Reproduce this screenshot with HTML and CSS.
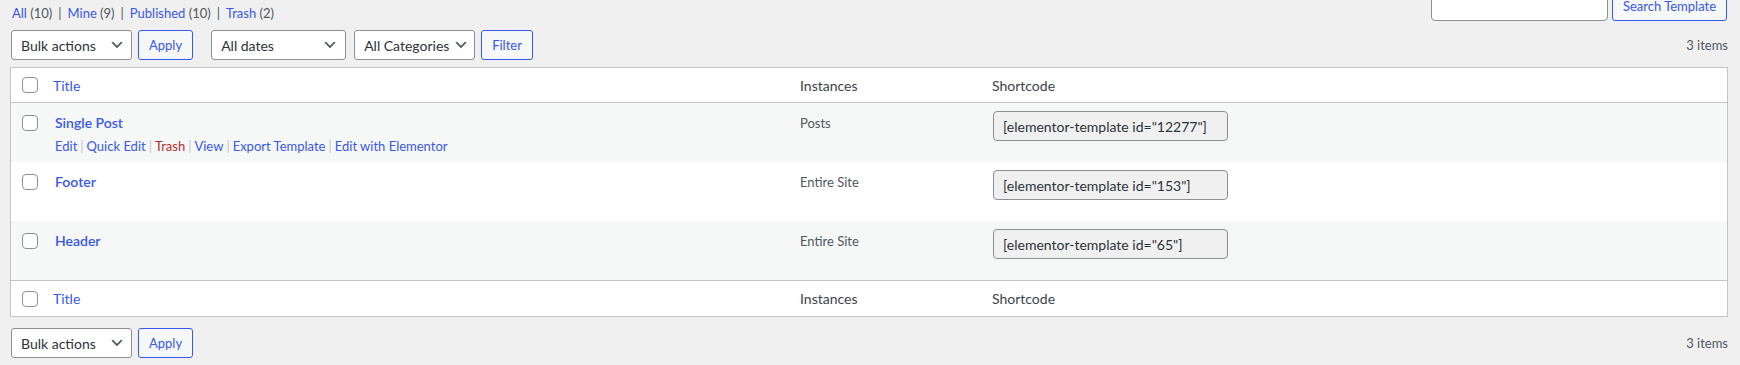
FILE: index.html
```html
<!DOCTYPE html>
<html lang="en">
<head>
<meta charset="utf-8">
<title>Templates</title>
<link rel="stylesheet" href="styles.css">
</head>
<body>
<div class="wrap">
  <div class="top-row">
    <ul class="subsubsub">
      <li><a href="#" class="current">All</a> <span class="count">(10)</span></li>
      <li class="sep">|</li>
      <li><a href="#">Mine</a> <span class="count">(9)</span></li>
      <li class="sep">|</li>
      <li><a href="#">Published</a> <span class="count">(10)</span></li>
      <li class="sep">|</li>
      <li><a href="#">Trash</a> <span class="count">(2)</span></li>
    </ul>
    <div class="search-box">
      <input class="search-input" type="search" aria-label="Search Templates">
      <button class="button search-btn">Search Template</button>
    </div>
  </div>

  <div class="tablenav tablenav-top">
    <div class="actions">
      <div class="select sel-bulk"><span>Bulk actions</span><svg viewBox="0 0 20 20" class="chev"><path d="M5 6l5 5 5-5 2 1-7 7-7-7 2-1z"/></svg></div>
      <button class="button">Apply</button>
    </div>
    <div class="actions">
      <div class="select sel-dates"><span>All dates</span><svg viewBox="0 0 20 20" class="chev"><path d="M5 6l5 5 5-5 2 1-7 7-7-7 2-1z"/></svg></div>
      <div class="select sel-cats"><span>All Categories</span><svg viewBox="0 0 20 20" class="chev"><path d="M5 6l5 5 5-5 2 1-7 7-7-7 2-1z"/></svg></div>
      <button class="button">Filter</button>
    </div>
    <div class="displaying-num">3 items</div>
  </div>

  <table class="list-table">
    <colgroup>
      <col class="c-check">
      <col class="c-title">
      <col class="c-inst">
      <col>
    </colgroup>
    <thead>
      <tr>
        <th class="check-col"><input type="checkbox" class="cb" aria-label="Select all"></th>
        <th><a href="#">Title</a></th>
        <th>Instances</th>
        <th>Shortcode</th>
      </tr>
    </thead>
    <tbody>
      <tr class="alt">
        <td class="check-col"><input type="checkbox" class="cb" aria-label="Select Single Post"></td>
        <td class="title-cell">
          <strong><a href="#" class="row-title">Single Post</a></strong>
          <div class="row-actions">
            <a href="#">Edit</a><span class="sep">|</span><a href="#">Quick&nbsp;Edit</a><span class="sep">|</span><a href="#" class="trash">Trash</a><span class="sep">|</span><a href="#">View</a><span class="sep">|</span><a href="#">Export Template</a><span class="sep">|</span><a href="#">Edit with Elementor</a>
          </div>
        </td>
        <td class="inst">Posts</td>
        <td class="sc"><input class="sc-input" type="text" readonly value="[elementor-template id=&quot;12277&quot;]"></td>
      </tr>
      <tr>
        <td class="check-col"><input type="checkbox" class="cb" aria-label="Select Footer"></td>
        <td class="title-cell"><strong><a href="#" class="row-title">Footer</a></strong></td>
        <td class="inst">Entire Site</td>
        <td class="sc"><input class="sc-input" type="text" readonly value="[elementor-template id=&quot;153&quot;]"></td>
      </tr>
      <tr class="alt">
        <td class="check-col"><input type="checkbox" class="cb" aria-label="Select Header"></td>
        <td class="title-cell"><strong><a href="#" class="row-title">Header</a></strong></td>
        <td class="inst">Entire Site</td>
        <td class="sc"><input class="sc-input" type="text" readonly value="[elementor-template id=&quot;65&quot;]"></td>
      </tr>
    </tbody>
    <tfoot>
      <tr>
        <th class="check-col"><input type="checkbox" class="cb" aria-label="Select all"></th>
        <th><a href="#">Title</a></th>
        <th>Instances</th>
        <th>Shortcode</th>
      </tr>
    </tfoot>
  </table>

  <div class="tablenav tablenav-bottom">
    <div class="actions">
      <div class="select sel-bulk"><span>Bulk actions</span><svg viewBox="0 0 20 20" class="chev"><path d="M5 6l5 5 5-5 2 1-7 7-7-7 2-1z"/></svg></div>
      <button class="button">Apply</button>
    </div>
    <div class="displaying-num">3 items</div>
  </div>
</div>
</body>
</html>
```

FILE: styles.css
```css
* { box-sizing: border-box; }

html, body {
  margin: 0;
  padding: 0;
  background: #f0f0f1;
}

body {
  font-family: Lato, "Liberation Sans", sans-serif;
  font-size: 13px;
  color: #3c434a;
  overflow: hidden;
}

a {
  color: #3858e9;
  text-decoration: none;
}

.wrap {
  padding: 0 12px 0 10px;
}

/* top row */
.top-row {
  display: flex;
  justify-content: space-between;
  align-items: flex-start;
  height: 24px;
}

.subsubsub {
  list-style: none;
  margin: 0;
  padding: 4px 0 0 2px;
  display: flex;
  line-height: 18px;
  font-size: 13px;
}

.subsubsub .count {
  color: #50575e;
}

.subsubsub .sep {
  color: #50575e;
  padding: 0 6px;
}

.search-box {
  display: flex;
  gap: 4px;
  margin-top: -9px;
  margin-right: 1px;
}

.search-input {
  width: 177px;
  height: 30px;
  border: 1px solid #8c8f94;
  border-radius: 4px;
  background: #fff;
  margin: 0;
  padding: 0 8px;
}

.button {
  height: 30px;
  padding: 0 10px;
  margin: 0;
  border: 1px solid #3858e9;
  border-radius: 3px;
  background: #f6f7f7;
  color: #3858e9;
  font-family: inherit;
  font-size: 13px;
  line-height: 28px;
  cursor: pointer;
}

.search-btn {
  width: 115px;
  padding: 0;
}

/* tablenav */
.tablenav {
  display: flex;
  align-items: center;
  height: 30px;
}

.tablenav-top {
  margin-top: 6px;
}

.tablenav-bottom {
  margin-top: 11px;
}

.actions {
  display: flex;
  gap: 6px;
  padding-left: 1px;
  margin-right: 17px;
}

.select {
  flex: none;
  height: 30px;
  display: flex;
  align-items: center;
  justify-content: space-between;
  padding: 0 6px 0 9px;
  background: #fff;
  border: 1px solid #8c8f94;
  border-radius: 3px;
  font-size: 14px;
  color: #2c3338;
  white-space: nowrap;
}

.chev {
  width: 16px;
  height: 16px;
  fill: #50575e;
  flex: none;
}

.sel-bulk { width: 121px; }
.sel-dates { width: 135px; padding-right: 7px; margin-right: 2px; }
.sel-cats { width: 121px; padding-right: 5px; }

.displaying-num {
  margin-left: auto;
  font-size: 13px;
  color: #50575e;
}

/* table */
.list-table {
  width: 1718px;
  margin-top: 7px;
  border: 1px solid #c3c4c7;
  border-spacing: 0;
  border-collapse: separate;
  table-layout: fixed;
  background: #fff;
}

.c-check { width: 32px; }
.c-title { width: 747px; }
.c-inst { width: 192px; }

.list-table th {
  height: 35px;
  padding: 0 10px;
  text-align: left;
  font-weight: 400;
  font-size: 14px;
  color: #3c434a;
  vertical-align: middle;
}

.list-table thead th {
  border-bottom: 1px solid #c3c4c7;
}

.list-table tfoot th {
  height: 36px;
  border-top: 1px solid #c3c4c7;
}

.list-table .check-col {
  padding: 0 0 0 11px;
}

.list-table tbody td.check-col {
  padding-top: 12px;
}

.cb {
  appearance: none;
  -webkit-appearance: none;
  display: block;
  width: 16px;
  height: 16px;
  margin: 0;
  border: 1px solid #8c8f94;
  border-radius: 4px;
  background: #fff;
}

.list-table tbody tr {
  height: 59px;
}

.list-table tbody tr.alt {
  background: #f6f7f7;
}

.list-table td {
  vertical-align: top;
  padding: 10px 10px 0;
  line-height: 20px;
}

.title-cell {
  padding-left: 12px !important;
}

.row-title {
  font-size: 14px;
  font-weight: 600;
}

.title-cell strong {
  display: block;
  line-height: 20px;
  font-weight: 600;
}

.row-actions {
  margin-top: 3px;
  font-size: 13px;
  line-height: 20px;
  white-space: nowrap;
}

.row-actions .sep {
  color: #c3c4c7;
  padding: 0 3px;
}

.row-actions .trash {
  color: #b32d2e;
}

.inst {
  font-size: 13px;
  color: #50575e;
}

.sc {
  padding-left: 11px !important;
  padding-top: 8px !important;
}

.sc-input {
  display: block;
  width: 235px;
  height: 30px;
  margin: 0;
  padding: 0 9px;
  border: 1px solid #8c8f94;
  border-radius: 4px;
  background: #f0f0f1;
  font-family: inherit;
  font-size: 14px;
  color: #2c3338;
}
```
